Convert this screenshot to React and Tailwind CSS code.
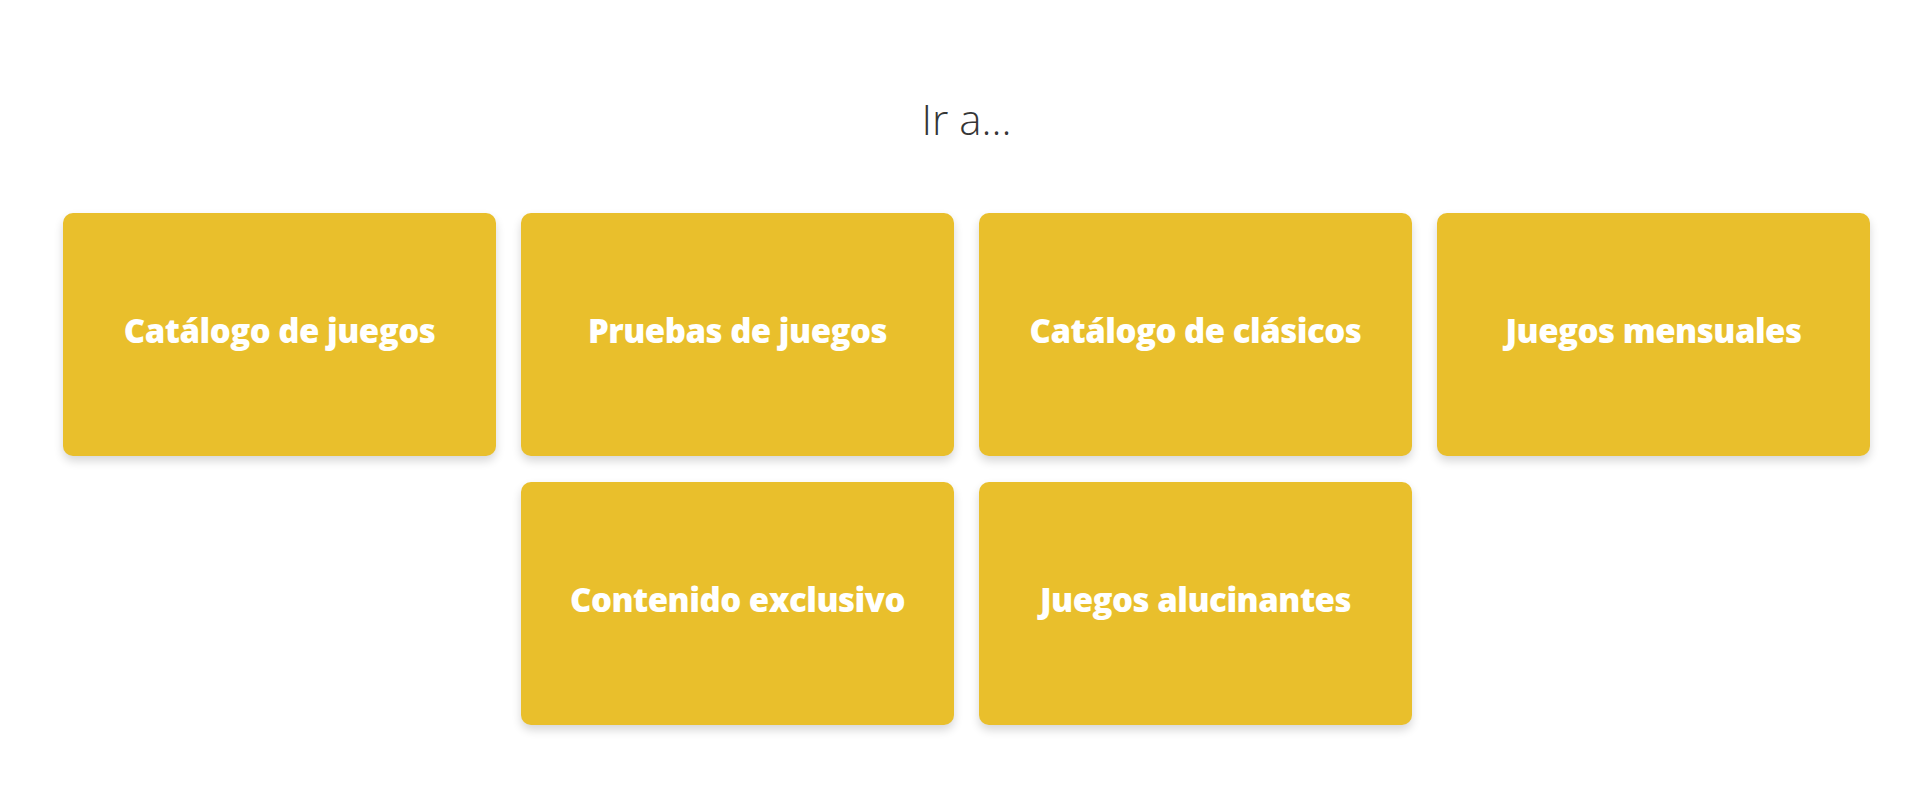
import React from 'react';

const links = [
  'Catálogo de juegos',
  'Pruebas de juegos',
  'Catálogo de clásicos',
  'Juegos mensuales',
  'Contenido exclusivo',
  'Juegos alucinantes',
];

export default function App() {
  return (
    <div className="min-h-screen bg-white pt-[94px] pb-[75px] pl-[63px] pr-[50px]" style={{ fontFamily: '"Open Sans", "Liberation Sans", sans-serif' }}>
      <h2 className="text-center text-[42px] leading-[50px] font-light text-[#363636]">Ir a...</h2>
      <div className="mt-[69px] flex flex-wrap justify-center gap-x-[25px] gap-y-[26px]">
        {links.map(label => (
          <a
            key={label}
            href="#"
            className="flex w-[433px] h-[243px] items-center justify-center rounded-[10px] bg-[#e9bf2c] text-[33px] font-extrabold text-white shadow-[0_5px_10px_rgba(0,0,0,0.16)] tracking-[-0.5px]"
          >
            <span className="-mt-[8px]">{label}</span>
          </a>
        ))}
      </div>
    </div>
  );
}
